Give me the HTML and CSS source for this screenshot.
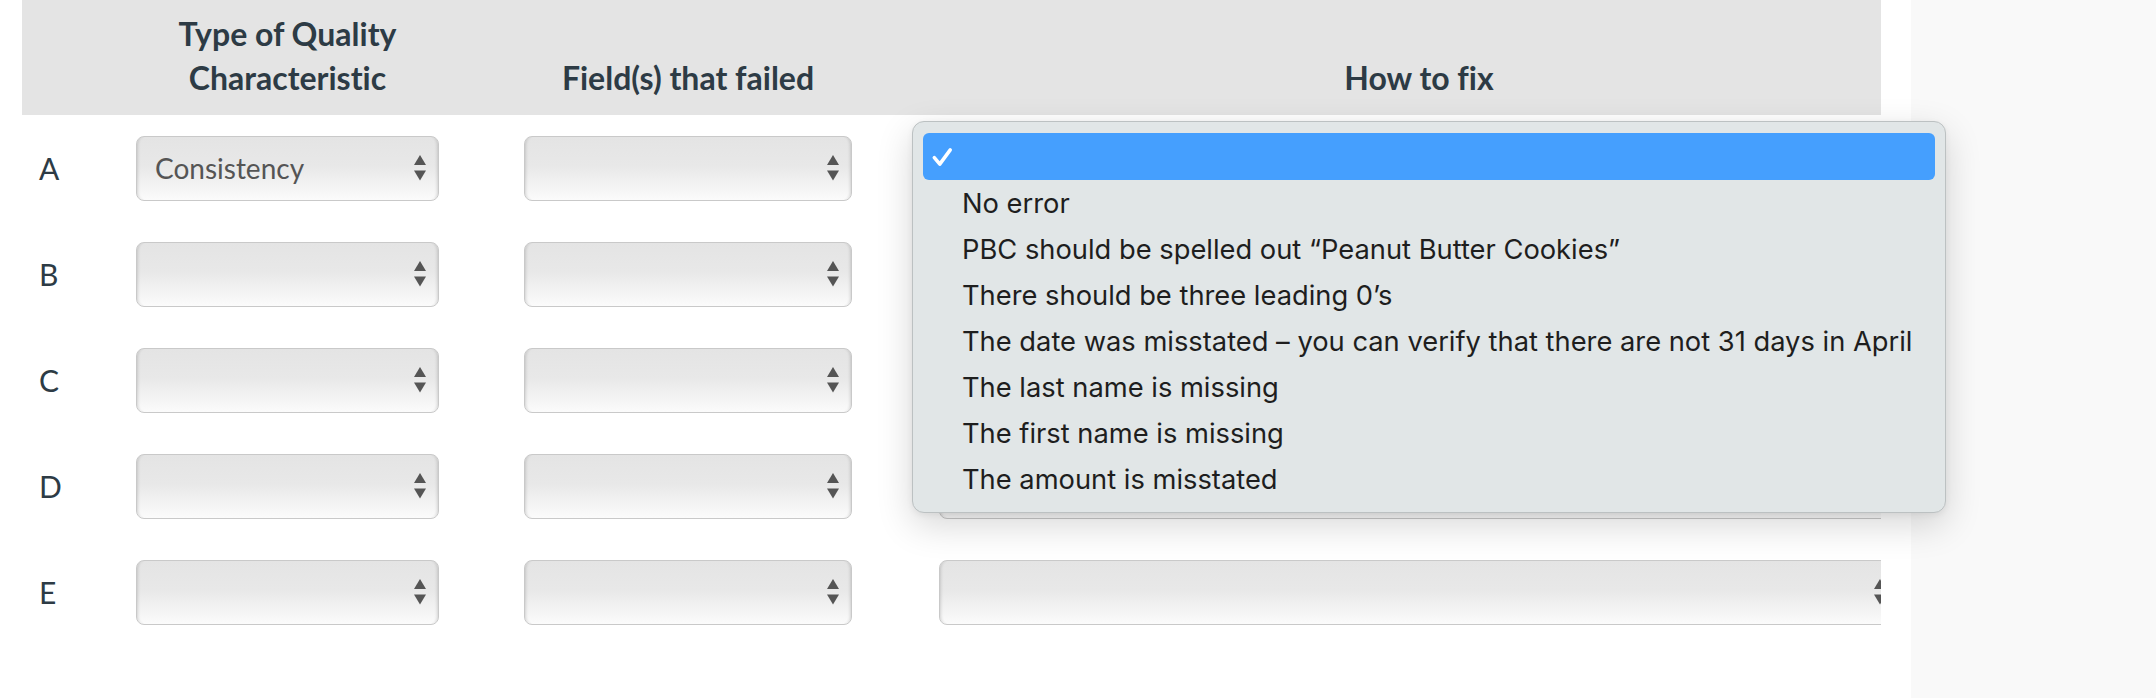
FILE: index.html
```html
<!DOCTYPE html>
<html lang="en">
<head>
<meta charset="utf-8">
<title>Quality Characteristics</title>
<link rel="stylesheet" href="styles.css">
</head>
<body>
<div class="page">
  <div class="main">
    <div class="table">
      <div class="head grid">
        <div class="hcell"></div>
        <div class="hcell">Type of Quality<br>Characteristic</div>
        <div class="hcell">Field(s) that failed</div>
        <div class="hcell">How to fix</div>
      </div>
      <div class="row grid">
        <div class="label">A</div>
        <div class="sel"><span class="val">Consistency</span><svg class="arrows" viewBox="0 0 12 26" width="12" height="26"><path d="M0 10 L6 0 L12 10 Z" fill="#555"/><path d="M0 15.5 L12 15.5 L6 25.5 Z" fill="#555"/></svg></div>
        <div class="sel"><span class="val"></span><svg class="arrows" viewBox="0 0 12 26" width="12" height="26"><path d="M0 10 L6 0 L12 10 Z" fill="#555"/><path d="M0 15.5 L12 15.5 L6 25.5 Z" fill="#555"/></svg></div>
        <div class="sel"><span class="val"></span><svg class="arrows" viewBox="0 0 12 26" width="12" height="26"><path d="M0 10 L6 0 L12 10 Z" fill="#555"/><path d="M0 15.5 L12 15.5 L6 25.5 Z" fill="#555"/></svg></div>
      </div>
      <div class="row grid">
        <div class="label">B</div>
        <div class="sel"><span class="val"></span><svg class="arrows" viewBox="0 0 12 26" width="12" height="26"><path d="M0 10 L6 0 L12 10 Z" fill="#555"/><path d="M0 15.5 L12 15.5 L6 25.5 Z" fill="#555"/></svg></div>
        <div class="sel"><span class="val"></span><svg class="arrows" viewBox="0 0 12 26" width="12" height="26"><path d="M0 10 L6 0 L12 10 Z" fill="#555"/><path d="M0 15.5 L12 15.5 L6 25.5 Z" fill="#555"/></svg></div>
        <div class="sel"><span class="val"></span><svg class="arrows" viewBox="0 0 12 26" width="12" height="26"><path d="M0 10 L6 0 L12 10 Z" fill="#555"/><path d="M0 15.5 L12 15.5 L6 25.5 Z" fill="#555"/></svg></div>
      </div>
      <div class="row grid">
        <div class="label">C</div>
        <div class="sel"><span class="val"></span><svg class="arrows" viewBox="0 0 12 26" width="12" height="26"><path d="M0 10 L6 0 L12 10 Z" fill="#555"/><path d="M0 15.5 L12 15.5 L6 25.5 Z" fill="#555"/></svg></div>
        <div class="sel"><span class="val"></span><svg class="arrows" viewBox="0 0 12 26" width="12" height="26"><path d="M0 10 L6 0 L12 10 Z" fill="#555"/><path d="M0 15.5 L12 15.5 L6 25.5 Z" fill="#555"/></svg></div>
        <div class="sel"><span class="val"></span><svg class="arrows" viewBox="0 0 12 26" width="12" height="26"><path d="M0 10 L6 0 L12 10 Z" fill="#555"/><path d="M0 15.5 L12 15.5 L6 25.5 Z" fill="#555"/></svg></div>
      </div>
      <div class="row grid">
        <div class="label">D</div>
        <div class="sel"><span class="val"></span><svg class="arrows" viewBox="0 0 12 26" width="12" height="26"><path d="M0 10 L6 0 L12 10 Z" fill="#555"/><path d="M0 15.5 L12 15.5 L6 25.5 Z" fill="#555"/></svg></div>
        <div class="sel"><span class="val"></span><svg class="arrows" viewBox="0 0 12 26" width="12" height="26"><path d="M0 10 L6 0 L12 10 Z" fill="#555"/><path d="M0 15.5 L12 15.5 L6 25.5 Z" fill="#555"/></svg></div>
        <div class="sel"><span class="val"></span><svg class="arrows" viewBox="0 0 12 26" width="12" height="26"><path d="M0 10 L6 0 L12 10 Z" fill="#555"/><path d="M0 15.5 L12 15.5 L6 25.5 Z" fill="#555"/></svg></div>
      </div>
      <div class="row grid">
        <div class="label">E</div>
        <div class="sel"><span class="val"></span><svg class="arrows" viewBox="0 0 12 26" width="12" height="26"><path d="M0 10 L6 0 L12 10 Z" fill="#555"/><path d="M0 15.5 L12 15.5 L6 25.5 Z" fill="#555"/></svg></div>
        <div class="sel"><span class="val"></span><svg class="arrows" viewBox="0 0 12 26" width="12" height="26"><path d="M0 10 L6 0 L12 10 Z" fill="#555"/><path d="M0 15.5 L12 15.5 L6 25.5 Z" fill="#555"/></svg></div>
        <div class="sel"><span class="val"></span><svg class="arrows" viewBox="0 0 12 26" width="12" height="26"><path d="M0 10 L6 0 L12 10 Z" fill="#555"/><path d="M0 15.5 L12 15.5 L6 25.5 Z" fill="#555"/></svg></div>
      </div>
    </div>
  </div>
  <div class="sidebar"></div>

  <div class="popup">
    <div class="opt selected"><svg class="check" viewBox="0 0 20 20" width="22" height="22"><path d="M3 10.5 L8 16.5 L17.5 3.5" fill="none" stroke="#ffffff" stroke-width="3.2" stroke-linecap="round" stroke-linejoin="round"/></svg><span class="otext"></span></div>
    <div class="opt"><span class="check"></span><span class="otext">No error</span></div>
    <div class="opt"><span class="check"></span><span class="otext">PBC should be spelled out “Peanut Butter Cookies”</span></div>
    <div class="opt"><span class="check"></span><span class="otext">There should be three leading 0’s</span></div>
    <div class="opt"><span class="check"></span><span class="otext">The date was misstated – you can verify that there are not 31 days in April</span></div>
    <div class="opt"><span class="check"></span><span class="otext">The last name is missing</span></div>
    <div class="opt"><span class="check"></span><span class="otext">The first name is missing</span></div>
    <div class="opt"><span class="check"></span><span class="otext">The amount is misstated</span></div>
  </div>
</div>
</body>
</html>
```

FILE: styles.css
```css
* { box-sizing: border-box; }

html, body {
  margin: 0;
  padding: 0;
  background: #ffffff;
}

body {
  font-family: Lato, "Noto Sans", "Liberation Sans", sans-serif;
  color: #2d3b45;
  font-variant-ligatures: no-common-ligatures;
}

.page {
  position: relative;
  display: flex;
  width: 2156px;
  height: 698px;
  overflow: hidden;
}

.main {
  width: 1911px;
  flex: none;
  padding: 0 30px 0 22px;
}

.table {
  width: 100%;
  overflow: hidden;
}

.grid {
  display: grid;
  grid-template-columns: 114px 303px 85px 328px 87px 960px;
  width: 1877px;
}

.head {
  background: #e4e4e4;
  height: 115px;
  align-items: end;
  padding-bottom: 15px;
}

.hcell {
  font-weight: 700;
  font-size: 32px;
  line-height: 44px;
  text-align: center;
}

.head .hcell:nth-child(2) { grid-column: 2; }
.head .hcell:nth-child(3) { grid-column: 4; }
.head .hcell:nth-child(4) { grid-column: 6; }

.row {
  height: 106px;
  align-items: center;
}

.row .sel:nth-child(2) { grid-column: 2; }
.row .sel:nth-child(3) { grid-column: 4; }
.row .sel:nth-child(4) { grid-column: 6; }

.label {
  font-size: 30px;
  padding-left: 17px;
  line-height: 1;
}

.sel {
  height: 65px;
  border: 1px solid #c9c9c9;
  border-radius: 8px;
  background: linear-gradient(#e4e4e4 0%, #e8e8e8 45%, #fbfbfb 100%);
  box-shadow: inset 4px 0 3px -3px rgba(0,0,0,0.14), inset -4px 0 3px -3px rgba(0,0,0,0.14);
  display: flex;
  align-items: center;
  justify-content: space-between;
  padding: 0 12px 0 18px;
}

.val {
  font-size: 28px;
  color: #555555;
}

.arrows {
  display: block;
  flex: none;
}

.sidebar {
  flex: 1;
  background: #f9f9f9;
}

.popup {
  position: absolute;
  left: 912px;
  top: 121px;
  width: 1034px;
  height: 392px;
  background: #e1e6e7;
  border: 1px solid #bcc1c2;
  border-radius: 12px;
  box-shadow: 0 12px 36px rgba(0,0,0,0.16), 0 2px 6px rgba(0,0,0,0.06);
  padding: 11px 10px 10px 10px;
  font-family: Inter, "Noto Sans", "Liberation Sans", sans-serif;
}

.opt {
  display: flex;
  align-items: center;
  height: 46px;
  padding-left: 8px;
  font-size: 27.3px;
  color: #1e1e1e;
}

.opt.selected {
  height: 47px;
  background: #459ffe;
  border-radius: 6px;
  color: #ffffff;
}

.check {
  display: block;
  width: 22px;
  height: 22px;
  flex: none;
  margin-right: 9px;
}
```
